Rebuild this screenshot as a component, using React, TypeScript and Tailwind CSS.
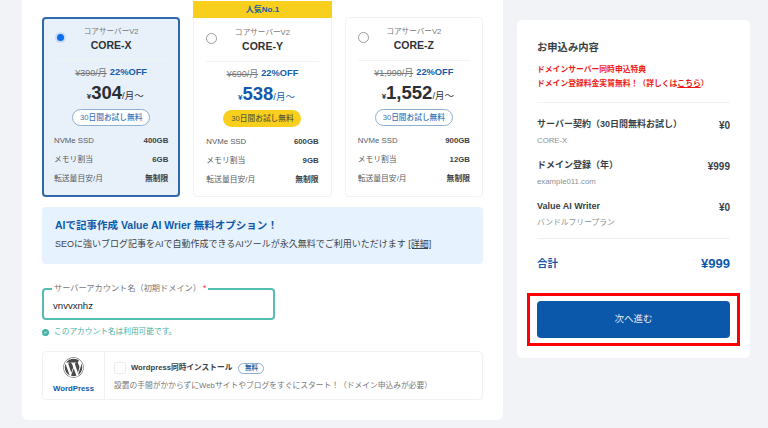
import { FaWordpress } from 'react-icons/fa';
import { FaCircleCheck } from 'react-icons/fa6';

interface Plan {
  name: string;
  listPrice: string;
  price: string;
  ssd: string;
  memory: string;
  popular?: boolean;
  selected?: boolean;
}

const plans: Plan[] = [
  { name: 'CORE-X', listPrice: '¥390/月', price: '304', ssd: '400GB', memory: '6GB', selected: true },
  { name: 'CORE-Y', listPrice: '¥690/月', price: '538', ssd: '600GB', memory: '9GB', popular: true },
  { name: 'CORE-Z', listPrice: '¥1,990/月', price: '1,552', ssd: '900GB', memory: '12GB' },
];

function SpecRow({ label, value }: { label: string; value: string }) {
  return (
    <div className="flex h-[19px] items-center justify-between text-[7.8px] leading-none">
      <span className="text-[#555b63]">{label}</span>
      <span className="font-bold text-[#3a3f45]">{value}</span>
    </div>
  );
}

function PlanCard({ plan }: { plan: Plan }) {
  return (
    <div
      className={`relative h-[180px] rounded-[4px] ${
        plan.selected
          ? 'border-2 border-[#2f68ab] bg-[#e8f0f9] px-[10px] pt-[7px]'
          : plan.popular
            ? 'rounded-t-none border border-[#f1f2f4] bg-white px-[12px] pt-[9px]'
            : 'border border-[#f1f2f4] bg-white px-[12px] pt-[8px]'
      }`}
    >
      {plan.popular && (
        <div className="absolute -top-[17px] -left-px -right-px flex h-[17px] items-center justify-center bg-[#f8cf1c] text-[8px] font-bold text-[#125aa8]">
          人気No.1
        </div>
      )}
      <div className="relative flex flex-col items-center border-b border-[#f1f2f4] pb-[7px]">
        <div
          className={`absolute top-[6px] flex h-[11px] w-[11px] items-center justify-center rounded-full ${
            plan.selected ? 'left-px bg-[#c9dcf6]' : 'left-0 border border-[#9a9a9a] bg-white'
          }`}
        >
          {plan.selected && <div className="h-[7px] w-[7px] rounded-full bg-[#0a6cf0]" />}
        </div>
        <div className="text-[7.6px] leading-[12px] text-[#777]">コアサーバーV2</div>
        <div className="text-[10.5px] font-bold leading-[15px] text-[#2e3338]">{plan.name}</div>
      </div>
      <div className="mt-[5px] flex h-[14px] items-center justify-center gap-[3px] leading-none">
        <span className="text-[9px] text-[#777] line-through">{plan.listPrice}</span>
        <span className="text-[9.3px] font-bold text-[#155cab]">22%OFF</span>
      </div>
      <div
        className={`mt-[4px] flex h-[28px] items-baseline justify-center pl-[8px] leading-none ${
          plan.popular ? 'text-[#1059ab]' : 'text-[#2b2f34]'
        }`}
      >
        <span className="text-[8px] font-bold">¥</span>
        <span className="text-[18.5px] font-bold">{plan.price}</span>
        <span className="text-[9.5px]">/月～</span>
      </div>
      <div className="-mt-[3px] flex justify-center">
        <div
          className={`flex h-[17px] w-[78px] items-center justify-center rounded-full text-[7.7px] font-medium ${
            plan.popular
              ? 'bg-[#f8cf1c] text-[#5d5a35]'
              : 'border border-[#8eaed2] bg-white text-[#3a76b8]'
          }`}
        >
          30日間お試し無料
        </div>
      </div>
      <div className="mt-[5px]">
        <SpecRow label="NVMe SSD" value={plan.ssd} />
        <SpecRow label="メモリ割当" value={plan.memory} />
        <SpecRow label="転送量目安/月" value="無制限" />
      </div>
    </div>
  );
}

function SummaryItem({ title, sub, price }: { title: string; sub: string; price: string }) {
  return (
    <div className="h-[41px]">
      <div className="flex h-[20px] items-center justify-between text-[9px] font-bold text-[#3a3f45]">
        <span>{title}</span>
        <span className="text-[10px]">{price}</span>
      </div>
      <div className="-mt-[1px] text-[7.8px] leading-[14px] text-[#8a8f95]">{sub}</div>
    </div>
  );
}

export default function App() {
  return (
    <div
      className="flex h-[428px] w-[768px] items-start gap-[14px] overflow-hidden bg-[#f1f3f6] pl-[22px]"
      style={{ fontFamily: '"Liberation Sans", "Noto Sans CJK JP", sans-serif' }}
    >
      <main className="h-[420px] w-[481px] rounded-b-[6px] bg-white px-[20px] pt-[17px]">
        <div className="grid grid-cols-3 gap-x-[13px]">
          {plans.map((plan) => (
            <PlanCard key={plan.name} plan={plan} />
          ))}
        </div>

        <div className="mt-[10px] h-[57px] rounded-[4px] bg-[#e6f2fd] px-[13px] pt-[11px]">
          <div className="text-[10.5px] font-bold leading-[15px] text-[#1059ab]">
            AIで記事作成 Value AI Wrier 無料オプション！
          </div>
          <div className="mt-[4px] text-[9px] leading-[15px] text-[#3f444a]">
            SEOに強いブログ記事をAIで自動作成できるAIツールが永久無料でご利用いただけます{' '}
            <span className="underline">[詳細]</span>
          </div>
        </div>

        <fieldset className="mt-[20px] h-[36px] w-[233px] rounded-[4px] border-2 border-[#55bdb1] pl-[9px]">
          <legend className="-ml-px px-[2px] text-[8.2px] leading-[10px] text-[#777]">
            サーバーアカウント名（初期ドメイン）<span className="ml-[2px] text-[#e33]">*</span>
          </legend>
          <div className="pt-[3px] text-[9.6px] leading-[18px] text-[#1f2328]">vnvvxnhz</div>
        </fieldset>

        <div className="mt-[6px] flex items-center gap-[5px] text-[7.7px] leading-[12px] text-[#3fb3a5]">
          <FaCircleCheck className="h-[7px] w-[7px]" />
          <span>このアカウント名は利用可能です。</span>
        </div>

        <div className="mt-[13px] flex h-[49px] rounded-[4px] border border-[#f0f1f3] bg-white">
          <div className="flex w-[62px] flex-col items-center border-r border-[#f0f1f3] pt-[5px]">
            <FaWordpress className="h-[21px] w-[21px] text-[#4a4a4a]" />
            <div className="mt-[6px] text-[7.8px] font-bold leading-[10px] text-[#1059ab]">WordPress</div>
          </div>
          <div className="pl-[9px] pt-[10px]">
            <div className="flex h-[12px] items-center">
              <div className="h-[12px] w-[12px] rounded-[2px] border border-[#eceef0]" />
              <span className="ml-[5px] text-[7.7px] font-bold text-[#3a3f45]">Wordpress同時インストール</span>
              <span className="ml-[6px] flex h-[11px] w-[26px] items-center justify-center rounded-full border border-[#8eaed2] text-[6.5px] font-bold text-[#2f68ab]">
                無料
              </span>
            </div>
            <div className="mt-[6px] text-[7.76px] leading-[12px] text-[#777]">
              設置の手間がかからずにWebサイトやブログをすぐにスタート！（ドメイン申込みが必要）
            </div>
          </div>
        </div>
      </main>

      <aside className="mt-[20px] h-[338px] w-[233px] rounded-[5px] bg-white px-[20px] pt-[21px]">
        <h2 className="text-[10.3px] font-bold leading-[14px] text-[#3a3f45]">お申込み内容</h2>
        <div className="mt-[8px] border-b border-[#f1f2f4] pb-[11px] text-[7.8px] font-bold leading-[14px] text-[#f01818]">
          <div>ドメインサーバー同時申込特典</div>
          <div>
            ドメイン登録料金実質無料！（詳しくは<span className="underline">こちら</span>）
          </div>
        </div>
        <div className="mt-[12px]">
          <SummaryItem title="サーバー契約（30日間無料お試し）" sub="CORE-X" price="¥0" />
          <SummaryItem title="ドメイン登録（年）" sub="example011.com" price="¥999" />
          <SummaryItem title="Value AI Writer" sub="バンドルフリープラン" price="¥0" />
        </div>
        <div className="flex h-[50px] items-center justify-between border-t border-[#eef0f2] text-[#1059ab]">
          <span className="text-[10.5px] font-bold">合計</span>
          <span className="text-[13px] font-bold">¥999</span>
        </div>
        <div className="-mx-[10px] mt-[5px] border-[3px] border-[#fb0007] px-[7px] py-[5px]">
          <button className="flex h-[37px] w-full items-center justify-center rounded-[4px] bg-[#0b58ab] text-[9.5px] text-[#e6edf5]">
            次へ進む
          </button>
        </div>
      </aside>
    </div>
  );
}
